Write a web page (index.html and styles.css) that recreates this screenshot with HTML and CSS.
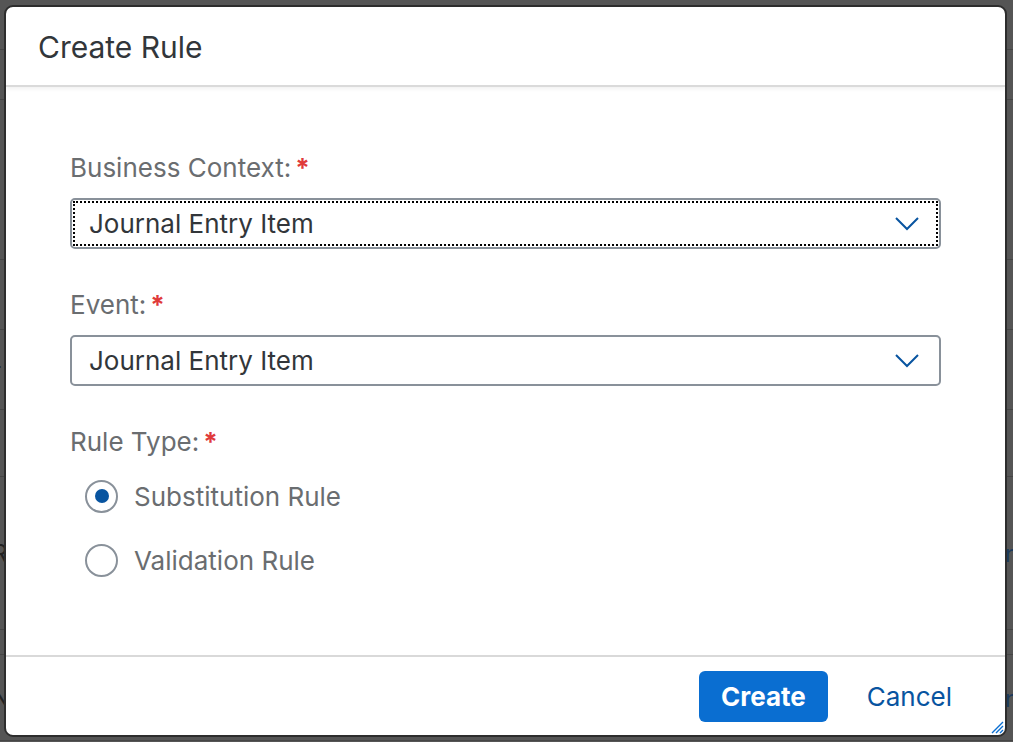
FILE: index.html
```html
<!DOCTYPE html>
<html lang="en">
<head>
<meta charset="utf-8">
<title>Create Rule</title>
<link rel="stylesheet" href="styles.css">
</head>
<body>
<div class="underlay">
  <div class="row r1"></div>
  <div class="row r2"></div>
  <div class="row r3"><span class="frag">i</span></div>
  <div class="row r4"></div>
  <div class="row r5"><span class="frag">r</span></div>
  <div class="row r6"></div>
  <div class="row r7"><span class="frag">R</span><span class="frag right">n</span></div>
  <div class="row r8"></div>
  <div class="row r9"><span class="frag">N</span><span class="frag right">n</span></div>
</div>

<div class="dialog" role="dialog" aria-label="Create Rule">
  <header class="dlg-header">
    <h1 class="dlg-title">Create Rule</h1>
  </header>
  <main class="dlg-content">
    <label class="field-label">Business Context:<span class="req">*</span></label>
    <div class="select focused">
      <span class="select-text">Journal Entry Item</span>
      <svg class="chev" viewBox="0 0 24 14" width="24" height="14"><path d="M1 1 L12 12 L23 1" fill="none" stroke="#0854a0" stroke-width="2"/></svg>
    </div>
    <label class="field-label gap">Event:<span class="req">*</span></label>
    <div class="select">
      <span class="select-text">Journal Entry Item</span>
      <svg class="chev" viewBox="0 0 24 14" width="24" height="14"><path d="M1 1 L12 12 L23 1" fill="none" stroke="#0854a0" stroke-width="2"/></svg>
    </div>
    <label class="field-label gap">Rule Type:<span class="req">*</span></label>
    <div class="radios">
      <div class="radio-row">
        <span class="radio checked"></span>
        <span class="radio-text">Substitution Rule</span>
      </div>
      <div class="radio-row">
        <span class="radio"></span>
        <span class="radio-text">Validation Rule</span>
      </div>
    </div>
  </main>
  <footer class="dlg-footer">
    <button class="btn btn-emph">Create</button>
    <button class="btn btn-trans">Cancel</button>
  </footer>
  <svg class="resize" viewBox="0 0 14 14" width="14" height="14">
    <path d="M13 2 L2 13 M13 6 L6 13 M13 10 L10 13" stroke="#0a6ed1" stroke-width="1.4" fill="none"/>
  </svg>
</div>
</body>
</html>
```
FILE: styles.css
```css
* { box-sizing: border-box; }
html, body { margin: 0; padding: 0; }
body {
  width: 1013px;
  height: 742px;
  overflow: hidden;
  background: #555555;
  font-family: Inter, "Open Sans", "Liberation Sans", sans-serif;
  position: relative;
}

.underlay { display: flex; flex-direction: column; }
.row { border-bottom: 1px solid #454545; position: relative; }
.r1 { height: 50px; }
.r2 { height: 50px; }
.r3 { height: 160px; }
.r4 { height: 70px; }
.r5 { height: 80px; }
.r6 { height: 67px; }
.r7 { height: 153px; }
.r8 { height: 25px; }
.r9 { height: 86px; }
.frag {
  position: absolute;
  left: -8px;
  top: 50%;
  transform: translateY(-50%);
  font-size: 24px;
  color: #222;
}
.frag.right { left: auto; right: -6px; color: #1d3a5c; }

.dialog {
  position: absolute;
  left: 4px;
  top: 5px;
  width: 1003px;
  height: 732px;
  background: #fff;
  border: 2px solid #2d2d2d;
  border-radius: 9px;
  display: flex;
  flex-direction: column;
  overflow: hidden;
}

.dlg-header {
  height: 80px;
  flex: none;
  padding-left: 32px;
  display: flex;
  align-items: center;
  border-bottom: 2px solid #dadada;
  box-shadow: 0 2px 4px rgba(0,0,0,0.06);
}
.dlg-title {
  margin: 0 0 -2px 0;
  font-weight: 400;
  font-size: 30px;
  color: #32363a;
}

.dlg-content {
  flex: 1;
  padding: 66px 64px 0 64px;
  display: flex;
  flex-direction: column;
}
.field-label {
  display: block;
  height: 30px;
  line-height: 30px;
  font-size: 26px;
  color: #6a6d70;
  margin-bottom: 15px;
}
.field-label.gap { margin-top: 41px; }
.req {
  color: #e03a3a;
  font-weight: 700;
  margin-left: 4px;
}

.select {
  position: relative;
  height: 51px;
  border: 2px solid #89919a;
  border-radius: 5px;
  display: flex;
  align-items: center;
  padding: 0 20px 0 17px;
}
.select.focused::after {
  content: "";
  position: absolute;
  inset: 1px;
  border: 2px dotted #000;
  pointer-events: none;
}
.select-text {
  flex: 1;
  font-size: 26px;
  color: #32363a;
}
.chev { flex: none; }

.radios {
  margin-top: -2px;
  display: flex;
  flex-direction: column;
  gap: 12px;
}
.radio-row {
  height: 52px;
  display: flex;
  align-items: center;
  padding-left: 15px;
  gap: 16px;
}
.radio {
  width: 33px;
  height: 33px;
  border: 2px solid #89919a;
  border-radius: 50%;
  display: flex;
  align-items: center;
  justify-content: center;
}
.radio.checked::after {
  content: "";
  width: 14px;
  height: 14px;
  border-radius: 50%;
  background: #0854a0;
}
.radio-text {
  font-size: 26px;
  color: #6a6d70;
}

.dlg-footer {
  height: 80px;
  flex: none;
  border-top: 2px solid #d9d9d9;
  display: flex;
  align-items: center;
  justify-content: flex-end;
  padding-right: 31px;
  gap: 17px;
}
.btn {
  height: 51px;
  padding: 0 22px;
  font-family: inherit;
  font-size: 26px;
  border: none;
  border-radius: 6px;
  background: transparent;
}
.btn-emph {
  background: #0a6ed1;
  color: #fff;
  font-weight: 700;
}
.btn-trans {
  color: #0854a0;
}

.resize {
  position: absolute;
  right: 1px;
  bottom: 1px;
}
```
